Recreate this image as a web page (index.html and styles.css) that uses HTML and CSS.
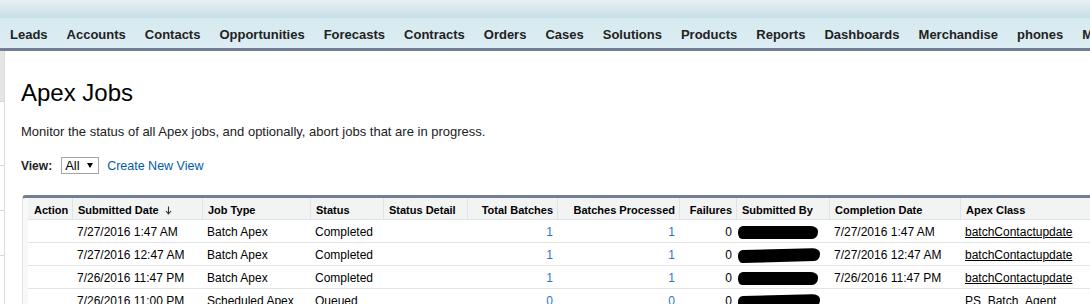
FILE: index.html
```html
<!DOCTYPE html>
<html lang="en">
<head>
  <meta charset="UTF-8">
  <title>Apex Jobs</title>
  <link rel="stylesheet" href="styles.css">
</head>
<body>
  <div class="topbar"></div>
  <nav class="tabs">
    <a href="#">Leads</a>
    <a href="#">Accounts</a>
    <a href="#">Contacts</a>
    <a href="#">Opportunities</a>
    <a href="#">Forecasts</a>
    <a href="#">Contracts</a>
    <a href="#">Orders</a>
    <a href="#">Cases</a>
    <a href="#">Solutions</a>
    <a href="#">Products</a>
    <a href="#">Reports</a>
    <a href="#">Dashboards</a>
    <a href="#">Merchandise</a>
    <a href="#">phones</a>
    <a href="#">Mobile</a>
  </nav>

  <div class="page">
    <!-- barra lateral recolhida -->
    <aside class="sidebar">
      <div class="side-top"></div>
      <div class="side-box side-tall"></div>
      <div class="side-box"></div>
      <div class="side-box"></div>
      <div class="side-box"></div>
    </aside>

    <main class="content">
      <h1>Apex Jobs</h1>
      <p class="intro">Monitor the status of all Apex jobs, and optionally, abort jobs that are in progress.</p>

      <div class="view-bar">
        <span class="view-label">View:</span>
        <span class="view-select">All <span class="caret"></span></span>
        <a class="view-link" href="#">Create New View</a>
      </div>

      <div class="list-frame">
        <table class="list">
          <colgroup>
            <col class="c-action">
            <col class="c-submitted">
            <col class="c-type">
            <col class="c-status">
            <col class="c-detail">
            <col class="c-total">
            <col class="c-processed">
            <col class="c-failures">
            <col class="c-by">
            <col class="c-completion">
            <col class="c-class">
          </colgroup>
          <thead>
            <tr>
              <th class="first">Action</th>
              <th>Submitted Date <svg class="sort" width="7" height="9" viewBox="0 0 7 9"><path d="M3.5 0.5V7.5M1 5L3.5 7.8L6 5" fill="none" stroke="#333" stroke-width="1.1"/></svg></th>
              <th>Job Type</th>
              <th>Status</th>
              <th>Status Detail</th>
              <th class="num">Total Batches</th>
              <th class="num">Batches Processed</th>
              <th class="num">Failures</th>
              <th>Submitted By</th>
              <th>Completion Date</th>
              <th>Apex Class</th>
            </tr>
          </thead>
          <tbody>
            <tr>
              <td></td>
              <td>7/27/2016 1:47 AM</td>
              <td>Batch Apex</td>
              <td>Completed</td>
              <td></td>
              <td class="num"><a href="#">1</a></td>
              <td class="num"><a href="#">1</a></td>
              <td class="num">0</td>
              <td><span class="redact"></span></td>
              <td>7/27/2016 1:47 AM</td>
              <td><a class="class-link" href="#">batchContactupdate</a></td>
            </tr>
            <tr>
              <td></td>
              <td>7/27/2016 12:47 AM</td>
              <td>Batch Apex</td>
              <td>Completed</td>
              <td></td>
              <td class="num"><a href="#">1</a></td>
              <td class="num"><a href="#">1</a></td>
              <td class="num">0</td>
              <td><span class="redact tilt"></span></td>
              <td>7/27/2016 12:47 AM</td>
              <td><a class="class-link" href="#">batchContactupdate</a></td>
            </tr>
            <tr>
              <td></td>
              <td>7/26/2016 11:47 PM</td>
              <td>Batch Apex</td>
              <td>Completed</td>
              <td></td>
              <td class="num"><a href="#">1</a></td>
              <td class="num"><a href="#">1</a></td>
              <td class="num">0</td>
              <td><span class="redact"></span></td>
              <td>7/26/2016 11:47 PM</td>
              <td><a class="class-link" href="#">batchContactupdate</a></td>
            </tr>
            <tr>
              <td></td>
              <td>7/26/2016 11:00 PM</td>
              <td>Scheduled Apex</td>
              <td>Queued</td>
              <td></td>
              <td class="num"><a href="#">0</a></td>
              <td class="num"><a href="#">0</a></td>
              <td class="num">0</td>
              <td><span class="redact tilt"></span></td>
              <td></td>
              <td><a class="class-link" href="#">PS_Batch_Agent</a></td>
            </tr>
          </tbody>
        </table>
      </div>
    </main>
  </div>
</body>
</html>
```

FILE: styles.css
```css
/* Geral */
body {
  margin: 0;
  width: 1090px;
  height: 304px;
  overflow: hidden;
  font-family: Arial, 'Liberation Sans', sans-serif;
  background: #ffffff;
  color: #000000;
}

/* Cabeçalho e abas */
.topbar {
  height: 18px;
  background: linear-gradient(#e7f0f3, #c6dee6);
}

.tabs {
  display: flex;
  height: 30px;
  padding-left: 0.5px;
  background: linear-gradient(#d6eaf0, #dcedf3);
  border-bottom: 3px solid #747e92;
  white-space: nowrap;
  overflow: hidden;
}

.tabs a {
  flex: none;
  padding: 3px 9.5px 0;
  line-height: 27px;
  font-size: 13px;
  font-weight: bold;
  color: #222;
  text-decoration: none;
}

/* Página */
.page {
  display: flex;
}

.sidebar {
  flex: none;
  width: 4px;
  height: 253px;
  border-right: 1px solid #dcdcdc;
}

.side-top {
  height: 50px;
  background: #e6e6e6;
}

.side-box {
  height: 44px;
  border-top: 1px solid #d6d6d6;
}

.side-tall {
  height: 63px;
}

.content {
  flex: 1;
  min-width: 0;
  padding-left: 16px;
}

h1 {
  margin: 28px 0 0;
  font-size: 24px;
  line-height: 28px;
  font-weight: normal;
  color: #000;
}

.intro {
  margin: 17px 0 0;
  font-size: 13px;
  line-height: 16px;
  color: #222;
}

/* Seletor de visualização */
.view-bar {
  display: flex;
  align-items: center;
  height: 17px;
  margin-top: 17px;
}

.view-label {
  font-size: 12px;
  font-weight: bold;
  color: #222;
}

.view-select {
  display: flex;
  align-items: center;
  gap: 7px;
  box-sizing: border-box;
  width: 38px;
  height: 17px;
  margin-left: 9px;
  padding-left: 3px;
  border: 1px solid #a6a6a6;
  font-size: 13px;
  color: #000;
}

.caret {
  width: 0;
  height: 0;
  border-left: 3.5px solid transparent;
  border-right: 3.5px solid transparent;
  border-top: 5px solid #000;
}

.view-link {
  margin-left: 8px;
  font-size: 12.5px;
  color: #015ba7;
  text-decoration: none;
}

/* Lista de jobs */
.list-frame {
  width: max-content;
  margin: 21px 0 0 1px;
  padding-left: 5px;
  background: #f8f8f8;
  border-top: 3px solid #747e92;
  border-left: 1px solid #e0e3e5;
  border-radius: 4px 0 0 0;
}

.list {
  width: 1082px;
  table-layout: fixed;
  border-collapse: separate;
  border-spacing: 0;
  background: #ffffff;
  font-size: 12px;
}

.c-action { width: 44px; }
.c-submitted { width: 130px; }
.c-type { width: 108px; }
.c-status { width: 73px; }
.c-detail { width: 84px; }
.c-total { width: 90px; }
.c-processed { width: 122px; }
.c-failures { width: 57px; }
.c-by { width: 93px; }
.c-completion { width: 131px; }
.c-class { width: 150px; }

.list th {
  padding: 5px 4px 1px 5px;
  line-height: 15px;
  font-size: 11px;
  font-weight: bold;
  text-align: left;
  white-space: nowrap;
  background: #f2f3f3;
  border-left: 1px solid #e0e3e5;
  border-bottom: 1px solid #e0e3e5;
}

.list th.first {
  border-left: none;
  padding-left: 6px;
}

.list td {
  padding: 4px 4px 2px 5px;
  line-height: 16px;
  white-space: nowrap;
  overflow: hidden;
  border-bottom: 1px solid #e3e3e3;
}

.list .num {
  text-align: right;
  padding-right: 4px;
}

.list td.num a {
  color: #2a78c2;
  text-decoration: none;
}

.sort {
  margin-left: 3px;
  vertical-align: -1px;
}

.class-link {
  color: #000;
  text-decoration: underline;
}

/* nomes ocultos */
.redact {
  display: inline-block;
  width: 80px;
  height: 13px;
  margin-left: -3px;
  vertical-align: -3px;
  background: #000;
  border-radius: 5px 8px 6px 4px / 6px 5px 7px 6px;
}

.redact.tilt {
  width: 82px;
  transform: rotate(-1.5deg);
}
```
